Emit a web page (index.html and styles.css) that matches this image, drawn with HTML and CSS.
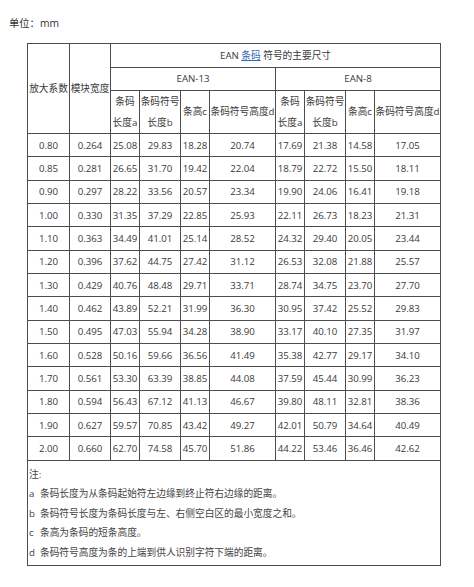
FILE: index.html
```html
<!DOCTYPE html>
<html lang="zh">
<head>
<meta charset="utf-8">
<title>EAN 条码符号的主要尺寸</title>
<link rel="stylesheet" href="styles.css">
</head>
<body>
<div class="unit">单位：mm</div>
<table class="spec">
  <colgroup>
    <col class="w42"><col class="w41"><col class="w29"><col class="w41"><col class="w29"><col class="w66">
    <col class="w29"><col class="w41"><col class="w29"><col class="w66">
  </colgroup>
  <tr class="r1">
    <td rowspan="3">放大系数</td>
    <td rowspan="3">模块宽度</td>
    <td colspan="8">EAN <a class="link" href="#">条码</a> 符号的主要尺寸</td>
  </tr>
  <tr class="r2">
    <td colspan="4">EAN-13</td>
    <td colspan="4">EAN-8</td>
  </tr>
  <tr class="r3">
    <td>条码<br>长度a</td>
    <td>条码符号<br>长度b</td>
    <td>条高c</td>
    <td>条码符号高度d</td>
    <td>条码<br>长度a</td>
    <td>条码符号<br>长度b</td>
    <td>条高c</td>
    <td>条码符号高度d</td>
  </tr>
  <tr class="d"><td>0.80</td><td>0.264</td><td>25.08</td><td>29.83</td><td>18.28</td><td>20.74</td><td>17.69</td><td>21.38</td><td>14.58</td><td>17.05</td></tr>
  <tr class="d"><td>0.85</td><td>0.281</td><td>26.65</td><td>31.70</td><td>19.42</td><td>22.04</td><td>18.79</td><td>22.72</td><td>15.50</td><td>18.11</td></tr>
  <tr class="d"><td>0.90</td><td>0.297</td><td>28.22</td><td>33.56</td><td>20.57</td><td>23.34</td><td>19.90</td><td>24.06</td><td>16.41</td><td>19.18</td></tr>
  <tr class="d"><td>1.00</td><td>0.330</td><td>31.35</td><td>37.29</td><td>22.85</td><td>25.93</td><td>22.11</td><td>26.73</td><td>18.23</td><td>21.31</td></tr>
  <tr class="d"><td>1.10</td><td>0.363</td><td>34.49</td><td>41.01</td><td>25.14</td><td>28.52</td><td>24.32</td><td>29.40</td><td>20.05</td><td>23.44</td></tr>
  <tr class="d"><td>1.20</td><td>0.396</td><td>37.62</td><td>44.75</td><td>27.42</td><td>31.12</td><td>26.53</td><td>32.08</td><td>21.88</td><td>25.57</td></tr>
  <tr class="d"><td>1.30</td><td>0.429</td><td>40.76</td><td>48.48</td><td>29.71</td><td>33.71</td><td>28.74</td><td>34.75</td><td>23.70</td><td>27.70</td></tr>
  <tr class="d"><td>1.40</td><td>0.462</td><td>43.89</td><td>52.21</td><td>31.99</td><td>36.30</td><td>30.95</td><td>37.42</td><td>25.52</td><td>29.83</td></tr>
  <tr class="d"><td>1.50</td><td>0.495</td><td>47.03</td><td>55.94</td><td>34.28</td><td>38.90</td><td>33.17</td><td>40.10</td><td>27.35</td><td>31.97</td></tr>
  <tr class="d"><td>1.60</td><td>0.528</td><td>50.16</td><td>59.66</td><td>36.56</td><td>41.49</td><td>35.38</td><td>42.77</td><td>29.17</td><td>34.10</td></tr>
  <tr class="d"><td>1.70</td><td>0.561</td><td>53.30</td><td>63.39</td><td>38.85</td><td>44.08</td><td>37.59</td><td>45.44</td><td>30.99</td><td>36.23</td></tr>
  <tr class="d"><td>1.80</td><td>0.594</td><td>56.43</td><td>67.12</td><td>41.13</td><td>46.67</td><td>39.80</td><td>48.11</td><td>32.81</td><td>38.36</td></tr>
  <tr class="d"><td>1.90</td><td>0.627</td><td>59.57</td><td>70.85</td><td>43.42</td><td>49.27</td><td>42.01</td><td>50.79</td><td>34.64</td><td>40.49</td></tr>
  <tr class="d"><td>2.00</td><td>0.660</td><td>62.70</td><td>74.58</td><td>45.70</td><td>51.86</td><td>44.22</td><td>53.46</td><td>36.46</td><td>42.62</td></tr>
  <tr class="notes">
    <td colspan="10">
      <p>注:</p>
      <p><span class="key">a</span>条码长度为从条码起始符左边缘到终止符右边缘的距离。</p>
      <p><span class="key">b</span>条码符号长度为条码长度与左、右侧空白区的最小宽度之和。</p>
      <p><span class="key">c</span>条高为条码的短条高度。</p>
      <p><span class="key">d</span>条码符号高度为条的上端到供人识别字符下端的距离。</p>
    </td>
  </tr>
</table>
</body>
</html>
```
FILE: styles.css
```css
html, body {
  margin: 0;
  padding: 0;
  background: #ffffff;
}
body {
  font-family: "Open Sans", "Noto Sans CJK SC", sans-serif;
  font-size: 9.7px;
  color: #3a3a3a;
}
.unit {
  padding: 16px 0 0 9px;
  height: 43px;
  line-height: 14px;
  font-size: 10.3px;
  color: #333;
  box-sizing: border-box;
}
.spec {
  margin-left: 27px;
  border-collapse: collapse;
  table-layout: fixed;
  width: 414px;
}
.w42 { width: 42px; }
.w41 { width: 41px; }
.w29 { width: 29px; }
.w66 { width: 66px; }
.spec td {
  border: 1px solid #4d4d4d;
  padding: 0;
  text-align: center;
  vertical-align: middle;
  line-height: 21px;
  white-space: nowrap;
  overflow: hidden;
}
.r1 td { height: 22.7px; }
.r2 td { height: 22.3px; }
.r3 td { height: 42px; }
.d td { height: 22.33px; }
.link {
  color: #3366bb;
  text-decoration: underline;
}
.notes td {
  text-align: left;
  vertical-align: top;
  height: 100px;
  padding: 4px 0 0 1px;
  color: #444;
}
.notes p {
  margin: 0;
  line-height: 19.5px;
}
.key {
  display: inline-block;
  width: 11px;
}
```
